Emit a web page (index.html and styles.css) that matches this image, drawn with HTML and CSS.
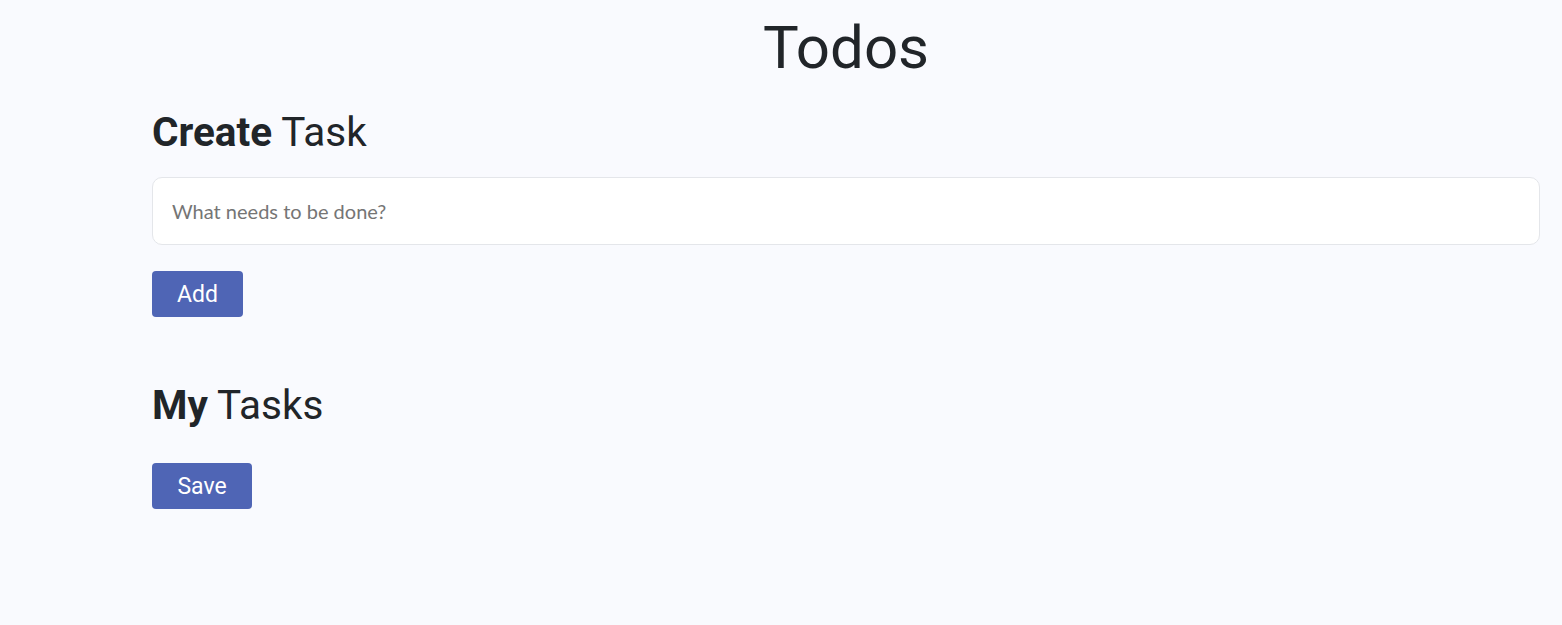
FILE: index.html
```html
<!DOCTYPE html>
<html lang="en">
<head>
<meta charset="utf-8">
<title>Todos</title>
<link rel="stylesheet" href="styles.css">
</head>
<body>
<main class="page">
  <h1 class="title">Todos</h1>
  <section class="create">
    <h2 class="section-title"><strong>Create</strong> Task</h2>
    <input class="task-input" type="text" placeholder="What needs to be done?">
    <button class="btn btn-add" type="button">Add</button>
  </section>
  <section class="tasks">
    <h2 class="section-title"><strong>My</strong> Tasks</h2>
    <button class="btn btn-save" type="button">Save</button>
  </section>
</main>
</body>
</html>
```

FILE: styles.css
```css
html, body {
  margin: 0;
  padding: 0;
  background: #f9fafe;
}
body {
  font-family: Roboto, "Liberation Sans", sans-serif;
  color: #212529;
}
.page {
  margin: 0 22px 0 152px;
  display: flex;
  flex-direction: column;
}
.title {
  margin: 12px 0 0;
  font-size: 60px;
  font-weight: 400;
  line-height: 72px;
  text-align: center;
}
.section-title {
  margin: 0;
  font-size: 40.5px;
  font-weight: 400;
  line-height: 48px;
}
.section-title strong {
  font-weight: 700;
}
.create {
  display: flex;
  flex-direction: column;
  align-items: flex-start;
  margin-top: 24px;
}
.task-input {
  box-sizing: border-box;
  width: 100%;
  height: 68px;
  margin-top: 21px;
  padding: 0 19px;
  border: 1px solid #e4e6ea;
  border-radius: 10px;
  background: #fff;
  font-family: Lato, sans-serif;
  font-size: 20px;
  color: #333;
  outline: none;
}
.task-input::placeholder {
  color: #757575;
}
.btn {
  height: 46px;
  border: none;
  border-radius: 4px;
  background: #4f65b5;
  color: #fff;
  font-family: Roboto, sans-serif;
  font-size: 23px;
  padding: 0;
  cursor: pointer;
}
.btn-add {
  margin-top: 26px;
  width: 91px;
}
.tasks {
  display: flex;
  flex-direction: column;
  align-items: flex-start;
  margin-top: 64px;
}
.btn-save {
  margin-top: 34px;
  width: 100px;
}
```
